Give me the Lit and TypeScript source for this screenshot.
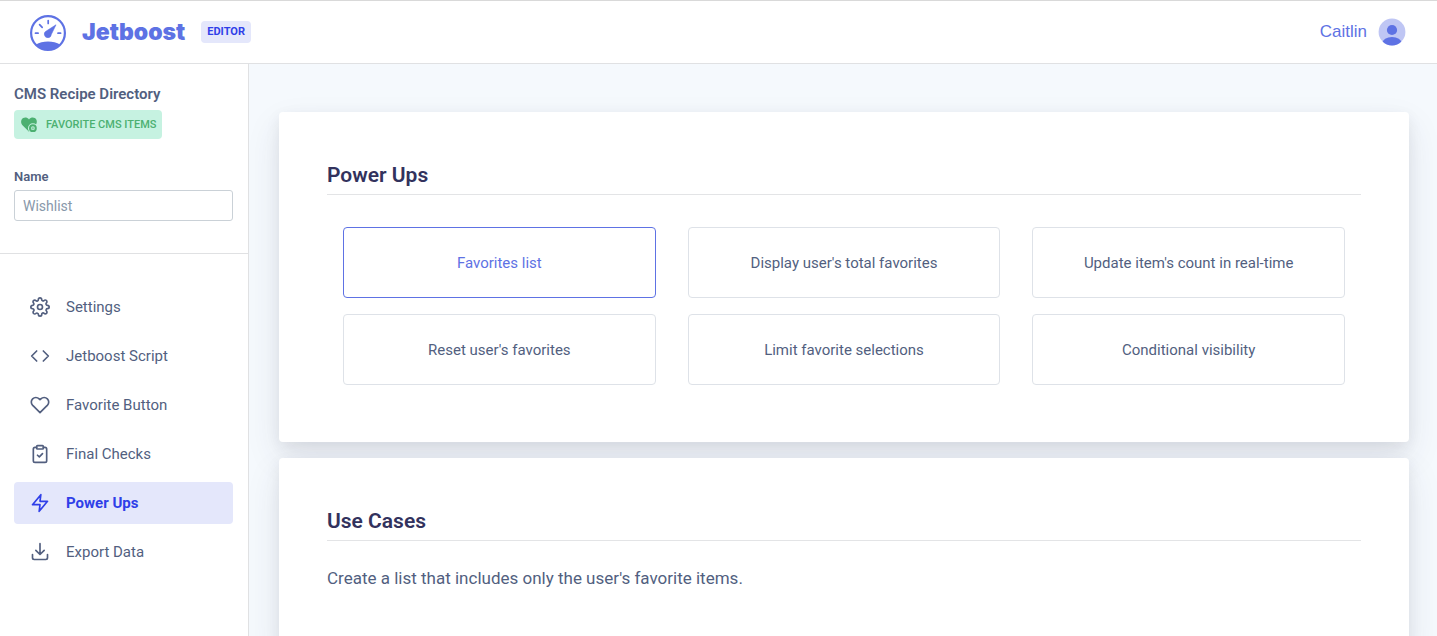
import { LitElement, html, css, svg } from "lit";
import { customElement, state } from "lit/decorators.js";
import { classMap } from "lit/directives/class-map.js";

const icons = {
  settings: svg`<circle cx="12" cy="12" r="3"/><path d="M19.4 15a1.65 1.65 0 0 0 .33 1.82l.06.06a2 2 0 0 1 0 2.83 2 2 0 0 1-2.83 0l-.06-.06a1.65 1.65 0 0 0-1.82-.33 1.65 1.65 0 0 0-1 1.51V21a2 2 0 0 1-2 2 2 2 0 0 1-2-2v-.09A1.65 1.65 0 0 0 9 19.4a1.65 1.65 0 0 0-1.82.33l-.06.06a2 2 0 0 1-2.83 0 2 2 0 0 1 0-2.83l.06-.06a1.65 1.65 0 0 0 .33-1.82 1.65 1.65 0 0 0-1.51-1H3a2 2 0 0 1-2-2 2 2 0 0 1 2-2h.09A1.65 1.65 0 0 0 4.6 9a1.65 1.65 0 0 0-.33-1.82l-.06-.06a2 2 0 0 1 0-2.83 2 2 0 0 1 2.83 0l.06.06a1.65 1.65 0 0 0 1.82.33H9a1.65 1.65 0 0 0 1-1.51V3a2 2 0 0 1 2-2 2 2 0 0 1 2 2v.09a1.65 1.65 0 0 0 1 1.51 1.65 1.65 0 0 0 1.82-.33l.06-.06a2 2 0 0 1 2.83 0 2 2 0 0 1 0 2.83l-.06.06a1.65 1.65 0 0 0-.33 1.82V9a1.65 1.65 0 0 0 1.51 1H21a2 2 0 0 1 2 2 2 2 0 0 1-2 2h-.09a1.65 1.65 0 0 0-1.51 1z"/>`,
  code: svg`<path d="M16 18l6-6-6-6M8 6l-6 6 6 6"/>`,
  heart: svg`<path d="M20.84 4.61a5.5 5.5 0 0 0-7.78 0L12 5.67l-1.06-1.06a5.5 5.5 0 0 0-7.78 7.78l1.06 1.06L12 21.23l7.78-7.78 1.06-1.06a5.5 5.5 0 0 0 0-7.78z"/>`,
  clipboard: svg`<path d="M16 4h2a2 2 0 0 1 2 2v14a2 2 0 0 1-2 2H6a2 2 0 0 1-2-2V6a2 2 0 0 1 2-2h2"/><rect x="8" y="2" width="8" height="4" rx="1"/><path d="M9 13.500l2.200 2 3.800-4"/>`,
  zap: svg`<path d="M13 2L3 14h9l-1 8 10-12h-9l1-8z"/>`,
  download: svg`<path d="M21 15v4a2 2 0 0 1-2 2H5a2 2 0 0 1-2-2v-4M7 10l5 5 5-5M12 15V2"/>`,
};

const navItems = [
  { icon: icons.settings, label: "Settings" },
  { icon: icons.code, label: "Jetboost Script" },
  { icon: icons.heart, label: "Favorite Button" },
  { icon: icons.clipboard, label: "Final Checks" },
  { icon: icons.zap, label: "Power Ups" },
  { icon: icons.download, label: "Export Data" },
];

const powerUps = [
  "Favorites list",
  "Display user's total favorites",
  "Update item's count in real-time",
  "Reset user's favorites",
  "Limit favorite selections",
  "Conditional visibility",
];

@customElement("app-root")
export class AppRoot extends LitElement {
  @state() private page = "Power Ups";
  @state() private powerUp = "Favorites list";

  static styles = css`
    :host {
      display: flex;
      flex-direction: column;
      height: 100vh;
      box-sizing: border-box;
      border-top: 1px solid #d9d9d9;
      font-family: Roboto, "Liberation Sans", sans-serif;
      font-size: 15px;
      line-height: 20px;
      color: #525f7f;
      background: #fff;
    }
    * {
      box-sizing: border-box;
    }
    .header {
      display: flex;
      align-items: center;
      justify-content: space-between;
      flex: none;
      height: 63px;
      padding: 0 31px 0 29px;
      border-bottom: 1px solid #e0e1e3;
    }
    .brand,
    .user {
      display: flex;
      align-items: center;
      color: #5e72e4;
      text-decoration: none;
    }
    .logo {
      width: 38px;
      height: 38px;
      margin-right: 15px;
    }
    .wordmark {
      font: 900 23px/32px Inter, sans-serif;
    }
    .tag {
      margin-left: 16px;
      padding: 0 6px;
      border-radius: 4px;
      background: #e4e7fb;
      color: #2f3fe8;
      font-size: 11px;
      font-weight: 700;
      line-height: 22px;
    }
    .user {
      gap: 11px;
      font-family: "Liberation Sans", sans-serif;
      font-size: 17px;
    }
    .avatar {
      width: 28px;
      height: 28px;
    }
    .body {
      display: flex;
      flex: 1;
      min-height: 0;
    }
    .sidebar {
      flex: none;
      width: 249px;
      border-right: 1px solid #e0e1e3;
    }
    .project {
      padding: 20px 15px 32px 14px;
      border-bottom: 1px solid #e0e1e3;
    }
    .project-name {
      margin: 0 0 6px;
      font-size: 15px;
      font-weight: 600;
      line-height: 20px;
    }
    .kind {
      display: inline-flex;
      align-items: center;
      gap: 8px;
      height: 29px;
      padding: 0 6px;
      border-radius: 4px;
      background: #c6f2e1;
      color: #4cb071;
      font-size: 11px;
      font-weight: 500;
    }
    .kind svg {
      width: 18px;
      height: 18px;
    }
    .field {
      display: flex;
      flex-direction: column;
      gap: 3px;
      margin-top: 28px;
    }
    .field label {
      font-size: 13px;
      font-weight: 600;
    }
    .field input {
      width: 100%;
      height: 31px;
      padding: 0 8px;
      border: 1px solid #cad1d7;
      border-radius: 3px;
      color: #8898aa;
      font: inherit;
      font-size: 14px;
    }
    .nav {
      display: flex;
      flex-direction: column;
      gap: 7px;
      padding: 32px 15px 32px 14px;
    }
    .nav a {
      display: flex;
      align-items: center;
      gap: 16px;
      height: 42px;
      padding: 0 16px;
      border-radius: 4px;
      color: inherit;
      text-decoration: none;
    }
    .nav svg {
      width: 20px;
      height: 20px;
      fill: none;
      stroke: currentColor;
      stroke-width: 2;
      stroke-linecap: round;
      stroke-linejoin: round;
    }
    .nav a.active {
      background: #e4e7fb;
      color: #2f3fe8;
      font-weight: 700;
    }
    .content {
      display: flex;
      flex-direction: column;
      flex: 1;
      gap: 16px;
      min-width: 0;
      padding: 48px 28px 48px 30px;
      overflow: auto;
      scrollbar-width: none;
      background: #f5f9fd;
    }
    .card {
      flex: none;
      padding: 48px 48px 57px;
      border-radius: 4px;
      background: #fff;
      box-shadow: 0 15px 35px rgba(50, 50, 93, 0.1), 0 5px 15px rgba(0, 0, 0, 0.07);
    }
    .card h2 {
      margin: 0;
      padding-bottom: 4px;
      border-bottom: 1px solid #e3e4e6;
      color: #32325d;
      font-size: 21px;
      font-weight: 600;
      line-height: 30px;
    }
    .options {
      display: grid;
      grid-template-columns: repeat(3, 1fr);
      gap: 16px 32px;
      padding: 32px 16px 0;
    }
    .options button {
      height: 71px;
      border: 1px solid #dee2e8;
      border-radius: 4px;
      background: #fff;
      color: inherit;
      font: inherit;
      cursor: pointer;
    }
    .options button.selected {
      border-color: #5e72e4;
      color: #5e72e4;
    }
    .text {
      margin: 23px 0 0;
      font-size: 17px;
      line-height: 28px;
    }
  `;

  render() {
    return html`
      <header class="header">
        <a class="brand" href="#">
          <svg class="logo" viewBox="0 -1 38 38" aria-hidden="true">
            <circle cx="19" cy="19" r="16.900" fill="none" stroke="currentColor" stroke-width="2.200" />
            <path d="M7 30.500C13 26.600 25 26.600 31 30.500C25 37.500 13 37.500 7 30.500Z" fill="currentColor" />
            <path d="M19.200 6.500v3M6.500 19.200h2.600M29 19.200h2.600M10.600 10.600l2.600 2.800" fill="none" stroke="currentColor" stroke-width="1.700" stroke-linecap="round" />
            <path d="M27 10.800L22.300 20.400A3.500 3.500 0 1 1 17.300 17Z" fill="currentColor" stroke="currentColor" stroke-width=".6" stroke-linejoin="round" />
          </svg>
          <span class="wordmark">Jetboost</span>
          <span class="tag">EDITOR</span>
        </a>
        <a class="user" href="#">
          <span>Caitlin</span>
          <svg class="avatar" viewBox="0 0 28 28" aria-hidden="true">
            <defs><clipPath id="disc"><circle cx="14" cy="14" r="13.400" /></clipPath></defs>
            <circle cx="14" cy="14" r="13.400" fill="#bfc6f4" />
            <g clip-path="url(#disc)" fill="currentColor">
              <circle cx="14" cy="12" r="5.100" />
              <ellipse cx="14" cy="25" rx="9.600" ry="6" />
            </g>
          </svg>
        </a>
      </header>
      <div class="body">
        <aside class="sidebar">
          <section class="project">
            <h1 class="project-name">CMS Recipe Directory</h1>
            <span class="kind">
              <svg viewBox="0 0 18 18" aria-hidden="true">
                <path d="M9 15.800L2.200 8.900C.4 6.600 1 3.200 3.200 2.100C5.100 1.100 7.500 1.600 9 3.500C10.500 1.600 12.900 1.100 14.800 2.100C17 3.200 17.600 6.600 15.800 8.900Z" fill="currentColor" />
                <circle cx="12.900" cy="12.200" r="4.900" fill="#c6f2e1" />
                <circle cx="12.900" cy="12.200" r="2.900" fill="none" stroke="currentColor" stroke-width="2" />
                <path d="M12.900 10.800v2.800M11.500 12.200h2.800" stroke="currentColor" stroke-width=".5" />
              </svg>
              FAVORITE CMS ITEMS
            </span>
            <div class="field">
              <label for="name">Name</label>
              <input id="name" type="text" value="Wishlist" />
            </div>
          </section>
          <nav class="nav">
            ${navItems.map(
              (item) => html`
                <a
                  href="#"
                  class=${classMap({ active: item.label === this.page })}
                  @click=${() => (this.page = item.label)}
                >
                  <svg viewBox="0 0 24 24" aria-hidden="true">${item.icon}</svg>
                  <span>${item.label}</span>
                </a>
              `
            )}
          </nav>
        </aside>
        <main class="content">
          <section class="card">
            <h2>Power Ups</h2>
            <div class="options">
              ${powerUps.map(
                (label) => html`
                  <button
                    type="button"
                    class=${classMap({ selected: label === this.powerUp })}
                    aria-pressed=${label === this.powerUp}
                    @click=${() => (this.powerUp = label)}
                  >
                    ${label}
                  </button>
                `
              )}
            </div>
          </section>
          <section class="card">
            <h2>Use Cases</h2>
            <p class="text">Create a list that includes only the user's favorite items.</p>
          </section>
        </main>
      </div>
    `;
  }
}
